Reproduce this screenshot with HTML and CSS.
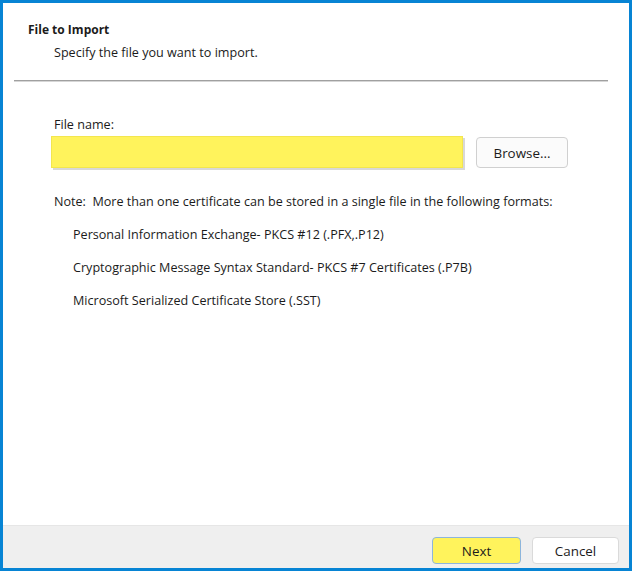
FILE: index.html
```html
<!DOCTYPE html>
<html lang="en">
<head>
    <meta charset="UTF-8">
    <meta name="viewport" content="width=device-width, initial-scale=1.0">
    <title>Certificate Import Wizard</title>
    <link rel="stylesheet" href="styles.css">
</head>
<body>
    <div class="frame">
        <div class="header">
            <div class="title">File to Import</div>
            <div class="subtitle">Specify the file you want to import.</div>
        </div>
        <div class="separator"></div>
        <div class="content">
            <label class="field-label" for="fileName">File name:</label>
            <div class="file-row">
                <input type="text" id="fileName" class="file-input">
                <button class="button browse">Browse...</button>
            </div>
            <p class="note">Note:&nbsp; More than one certificate can be stored in a single file in the following formats:</p>
            <ul class="formats">
                <li>Personal Information Exchange- PKCS #12 (.PFX,.P12)</li>
                <li>Cryptographic Message Syntax Standard- PKCS #7 Certificates (.P7B)</li>
                <li>Microsoft Serialized Certificate Store (.SST)</li>
            </ul>
        </div>
        <div class="footer">
            <button class="button next">Next</button>
            <button class="button cancel">Cancel</button>
        </div>
    </div>
</body>
</html>
```

FILE: styles.css
```css
html, body {
    margin: 0;
    padding: 0;
}
body {
    font-family: "Open Sans", "Noto Sans", sans-serif;
    font-size: 12.6px;
    color: #1b1b1b;
    background: #ffffff;
}
.frame {
    box-sizing: border-box;
    width: 632px;
    height: 571px;
    border: 3px solid #0784d4;
    display: flex;
    flex-direction: column;
    background: #ffffff;
}
.header {
    padding: 19px 0 0 25px;
}
.title {
    font-weight: bold;
    font-size: 12px;
    line-height: 16px;
}
.subtitle {
    margin: 7px 0 0 26px;
    line-height: 16px;
}
.separator {
    margin: 19px 21px 0 11px;
    height: 1px;
    background: #a0a0a0;
    border-bottom: 1px solid #d6d6d6;
}
.content {
    flex: 1;
    padding: 35px 0 0 51px;
}
.field-label {
    display: block;
    line-height: 16px;
}
.file-row {
    display: flex;
    align-items: flex-start;
    margin: 3px 0 0 -3px;
}
.file-input {
    box-sizing: border-box;
    width: 412px;
    height: 32px;
    margin: 0;
    border: 1px solid #f3e64e;
    background: #fff35c;
    box-shadow: 2px 2px 0 #d8d8d8;
    outline: none;
}
.button {
    box-sizing: border-box;
    font-family: "Open Sans", "Noto Sans", sans-serif;
    font-size: 13.4px;
    color: #1b1b1b;
    background: #fbfbfb;
    border: 1px solid #d0d0d0;
    border-radius: 4px;
    padding: 0;
    margin: 0;
}
.browse {
    width: 92px;
    height: 31px;
    margin: 1px 0 0 13px;
}
.note {
    margin: 26px 0 0;
    line-height: 16px;
}
.formats {
    list-style: none;
    margin: 17px 0 0;
    padding: 0 0 0 19px;
}
.formats li {
    line-height: 16px;
    margin-bottom: 17px;
}
.footer {
    height: 43px;
    box-sizing: border-box;
    background: #efefef;
    border-top: 1px solid #e6e6e6;
    display: flex;
    justify-content: flex-end;
    align-items: flex-start;
    gap: 11px;
    padding: 11px 10px 0 0;
}
.next {
    width: 89px;
    height: 27px;
    background: #fff35c;
    border-color: #8db5dc;
}
.cancel {
    width: 87px;
    height: 27px;
    background: #ffffff;
    border-color: #dadada;
}
```
